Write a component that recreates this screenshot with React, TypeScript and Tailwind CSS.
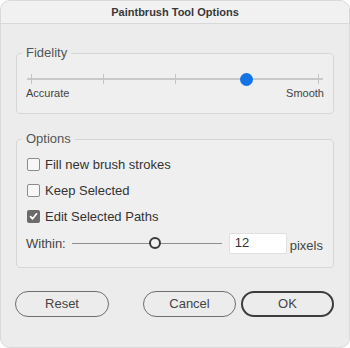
import React from 'react';

const font = { fontFamily: '"Liberation Sans", Arial, sans-serif' };

function Checkbox({ checked, label }: { checked?: boolean; label: string }) {
  return (
    <div className="flex h-[26px] items-center pl-[10px]">
      {checked ? (
        <div className="flex h-[13px] w-[13px] items-center justify-center rounded-[2px] bg-[#6b6b6b]">
          <svg width="9" height="9" viewBox="0 0 9 9">
            <path d="M1.5 4.6 L3.6 6.8 L7.6 1.8" fill="none" stroke="#fff" strokeWidth="1.7" strokeLinecap="round" strokeLinejoin="round" />
          </svg>
        </div>
      ) : (
        <div className="h-[13px] w-[13px] rounded-[2px] border border-[#8c8c8c] bg-[#f7f7f7]" />
      )}
      <span className="ml-[5px] text-[13px] leading-none text-[#333]">{label}</span>
    </div>
  );
}

function PillButton({ label, primary, width }: { label: string; primary?: boolean; width: string }) {
  return (
    <button
      className={
        primary
          ? 'h-[26px] rounded-full border-2 border-[#3d3d3d] text-[13px] text-[#444] ' + width
          : 'h-[26px] rounded-full border border-[#6e6e6e] text-[13px] text-[#444] ' + width
      }
    >
      {label}
    </button>
  );
}

export default function App() {
  const ticks = [0, 1, 2, 3, 4];

  return (
    <div className="h-[348px] w-[350px] bg-white" style={font}>
      <div className="flex h-full flex-col overflow-hidden rounded-[10px] border border-[#d9d9d9] bg-[#ececec]">
        {/* Title bar */}
        <div className="h-[23px] border-b border-[#d8d8d8] bg-[#f1f1f1] text-center text-[11px] font-bold leading-[22px] text-[#383838]">
          Paintbrush Tool Options
        </div>

        {/* Fidelity */}
        <fieldset className="mx-[15px] mt-[21px] rounded-[4px] border border-[#d6d6d6] bg-[#efefef] pb-[14px]">
          <legend className="ml-[5px] px-[4px] text-[13px] leading-[16px] text-[#555]">Fidelity</legend>
          <div className="relative mx-[10px] mt-[10px] h-[16px]">
            <div className="absolute inset-x-0 top-[7px] h-[2px] bg-[#c9c9c9]" />
            <div className="absolute inset-x-[4px] inset-y-[3px] flex justify-between">
              {ticks.map((t) => (
                <div key={t} className="w-px bg-[#c4c4c4]" />
              ))}
            </div>
            <div className="absolute left-[213px] top-[1.5px] h-[13px] w-[13px] rounded-full bg-[#1473e6]" />
          </div>
          <div className="flex justify-between px-[9px] text-[11px] leading-[12px] text-[#444]">
            <span>Accurate</span>
            <span>Smooth</span>
          </div>
        </fieldset>

        {/* Options */}
        <fieldset className="mx-[15px] mt-[17px] rounded-[4px] border border-[#d6d6d6] bg-[#efefef] pb-[10px]">
          <legend className="ml-[5px] px-[4px] text-[13px] leading-[16px] text-[#555]">Options</legend>
          <div className="mt-[4px]">
            <Checkbox label="Fill new brush strokes" />
            <Checkbox label="Keep Selected" />
            <Checkbox checked label="Edit Selected Paths" />
            <div className="flex h-[28px] items-center pl-[9px]">
              <span className="text-[13px] leading-none text-[#444]">Within:</span>
              <div className="relative ml-[6px] h-[12px] w-[150px]">
                <div className="absolute inset-x-0 top-[5.5px] h-px bg-[#8f8f8f]" />
                <div className="absolute left-[77px] top-0 h-[12px] w-[12px] rounded-full border-2 border-[#3a3a3a] bg-[#f2f2f2]" />
              </div>
              <div className="ml-[7px] flex h-[21px] w-[58px] items-center rounded-[2px] border border-[#e0e0e0] bg-white pl-[5px] text-[13px] text-[#333]">
                12
              </div>
              <span className="ml-[3px] mt-[4px] text-[13px] leading-none text-[#444]">pixels</span>
            </div>
          </div>
        </fieldset>

        {/* Buttons */}
        <div className="mt-[23px] flex pl-[14px] pr-[15px]">
          <PillButton label="Reset" width="w-[94px]" />
          <div className="flex-1" />
          <PillButton label="Cancel" width="w-[93px]" />
          <div className="w-[5px]" />
          <PillButton label="OK" primary width="w-[93px]" />
        </div>
      </div>
    </div>
  );
}
